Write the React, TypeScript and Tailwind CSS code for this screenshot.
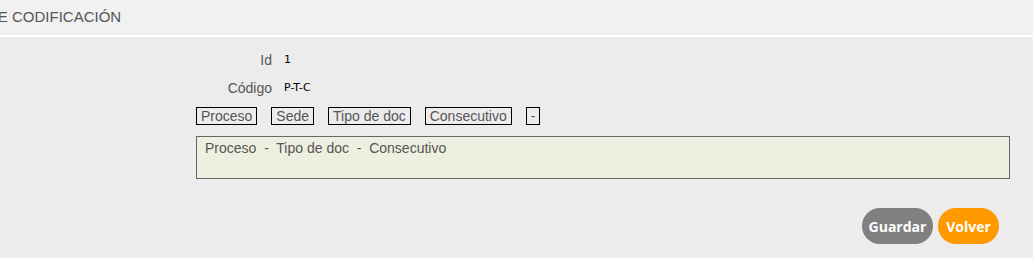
import React from "react";

const chips = ["Proceso", "Sede", "Tipo de doc", "Consecutivo", "-"];

export default function App() {
  return (
    <div className="w-[1033px] h-[258px] bg-[#ececec] overflow-hidden font-['Liberation_Sans',Arial,sans-serif]">
      <div className="h-[37px] bg-[#f1f1f1] border-b-2 border-white flex items-center overflow-hidden">
        <span className="ml-[-13px] text-[15px] text-[#555] whitespace-nowrap">DE CODIFICACIÓN</span>
      </div>
      <div className="pt-[9px]">
        <div className="flex items-center h-[28px]">
          <div className="w-[272px] text-right text-[14px] text-[#555]">Id</div>
          <div className="ml-[12px] text-[11px] text-black font-['DejaVu_Sans',sans-serif]">1</div>
        </div>
        <div className="flex items-center h-[28px]">
          <div className="w-[272px] text-right text-[14px] text-[#555]">Código</div>
          <div className="ml-[12px] text-[11px] text-black font-['DejaVu_Sans',sans-serif]">P-T-C</div>
        </div>
        <div className="flex items-center gap-[14px] ml-[196px] mt-[5px]">
          {chips.map((c) => (
            <span
              key={c}
              className="border border-black px-[4px] h-[18px] leading-[16px] text-[14px] text-[#555]"
            >
              {c}
            </span>
          ))}
        </div>
        <div className="ml-[196px] mt-[11px] w-[814px] h-[43px] border border-[#666] bg-[#eeefe0] pl-[8px] pt-[1px] text-[14px] text-[#555] whitespace-pre">
          {"Proceso  -  Tipo de doc  -  Consecutivo"}
        </div>
        <div className="flex justify-end gap-[5px] mr-[34px] mt-[29px]">
          <button className="h-[36px] w-[71px] rounded-full bg-[#808080] text-white text-[14px] font-bold font-['Open_Sans',sans-serif]">
            Guardar
          </button>
          <button className="h-[36px] w-[61px] rounded-full bg-[#ff9900] text-white text-[14px] font-bold font-['Open_Sans',sans-serif]">
            Volver
          </button>
        </div>
      </div>
    </div>
  );
}
